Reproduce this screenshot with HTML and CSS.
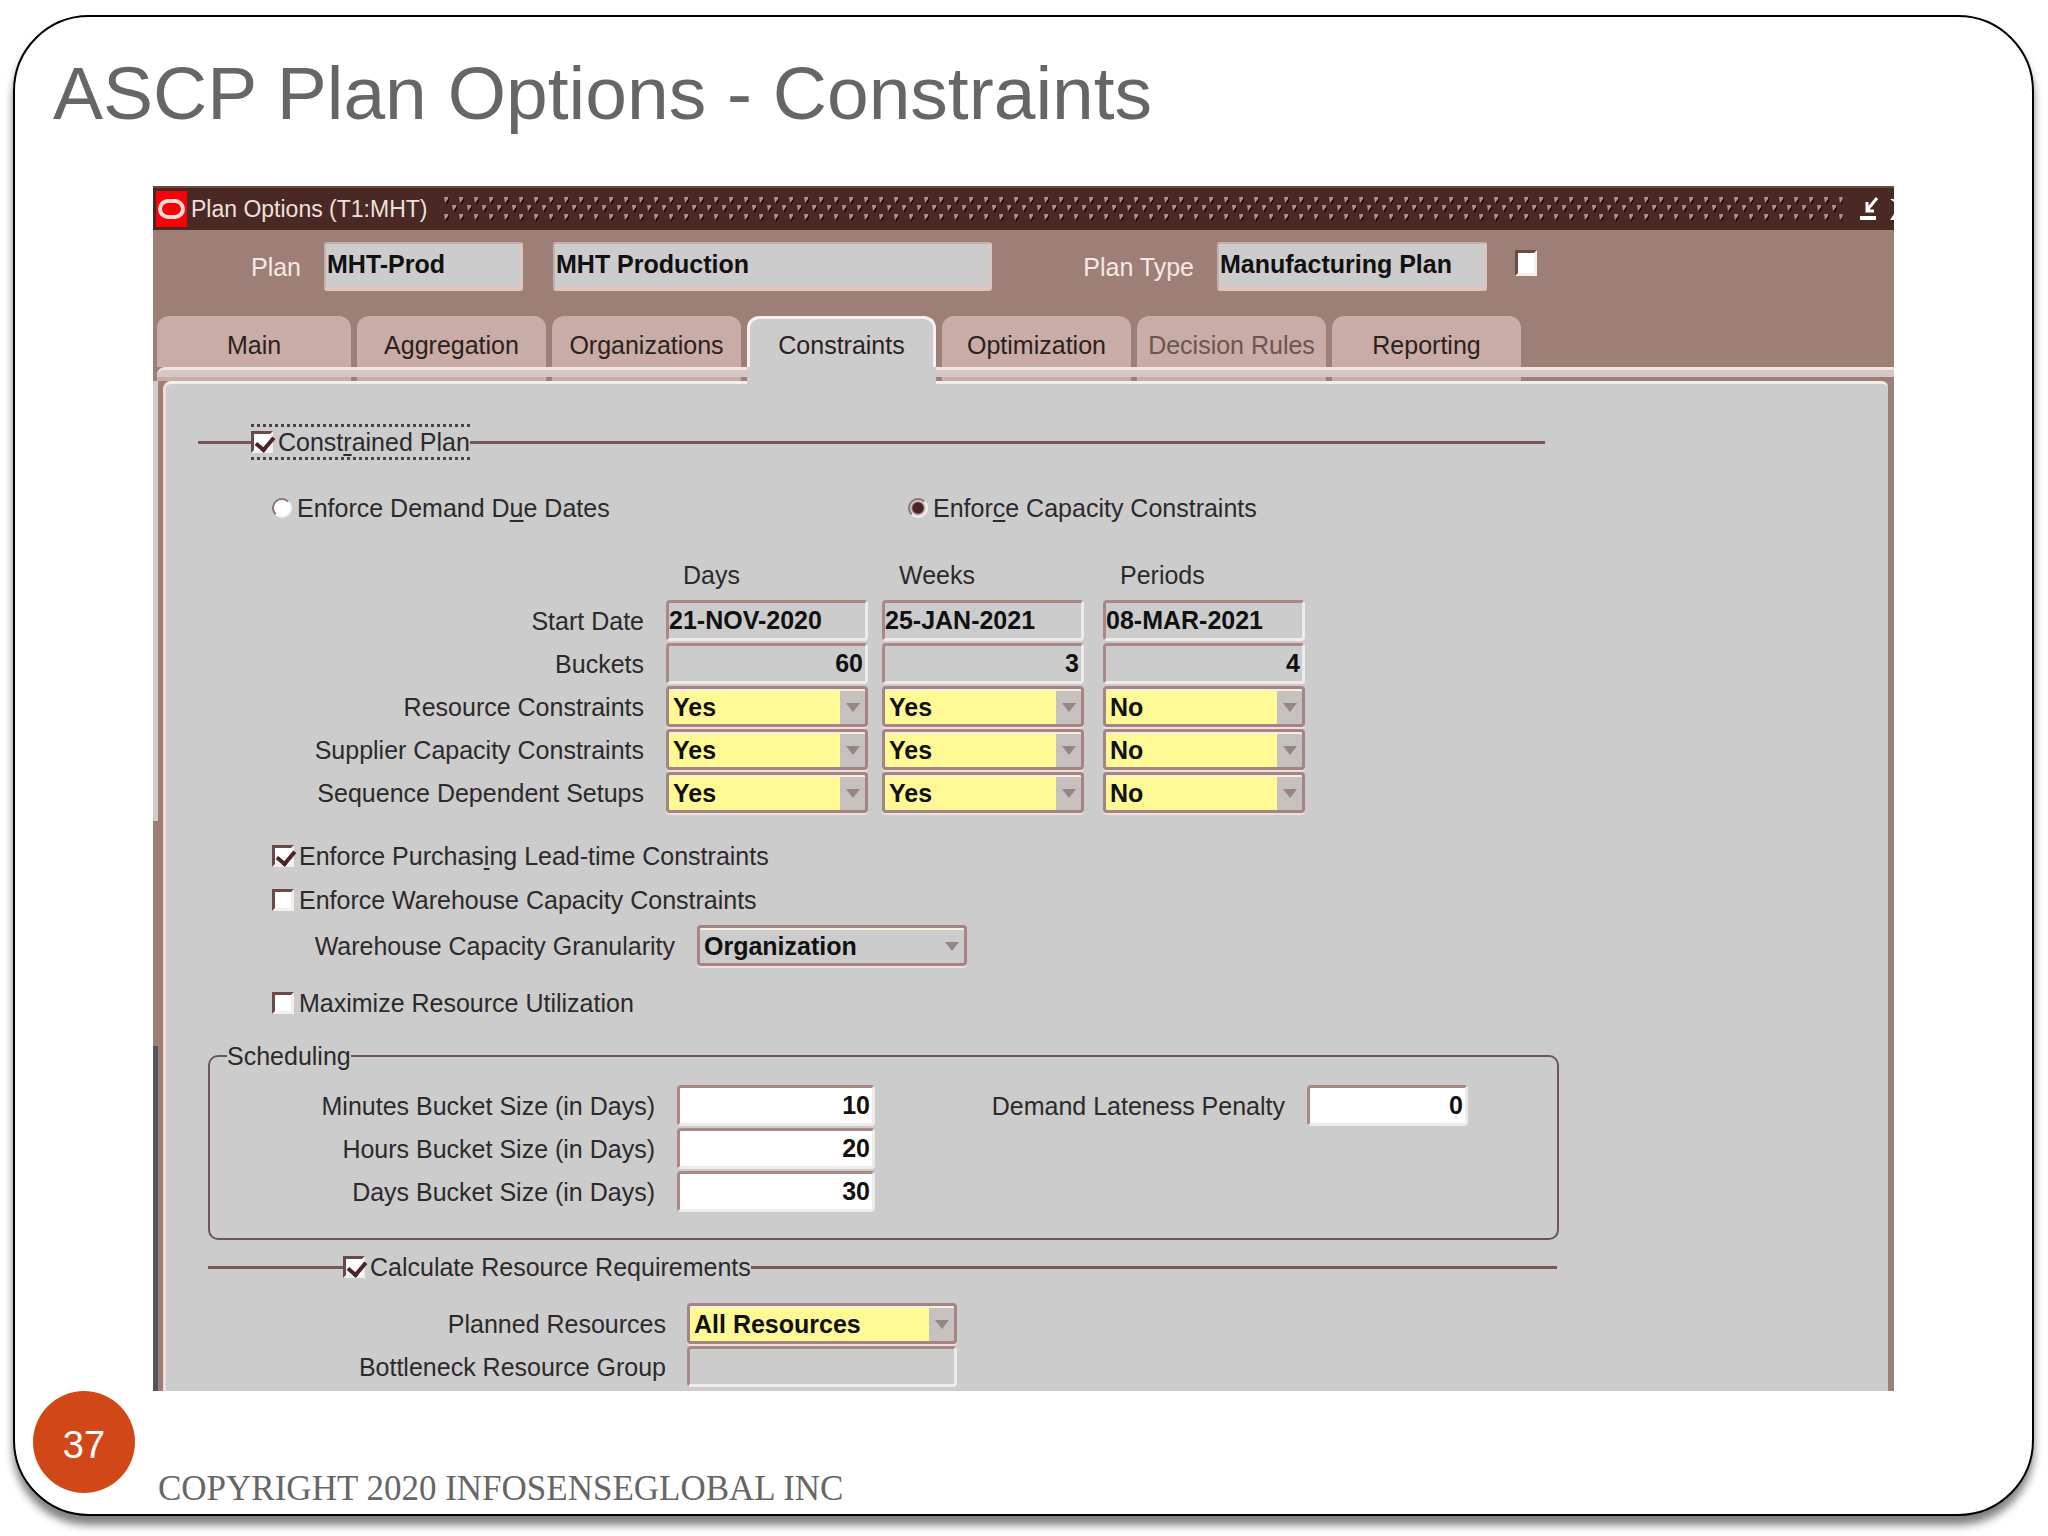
FILE: index.html
```html
<!DOCTYPE html>
<html lang="en">

<head>
  <meta charset="UTF-8" />
  <title>ASCP Plan Options - Constraints</title>
  <link rel="stylesheet" href="styles.css">
</head>

<body>

  <main class="slide">
    <h1 class="slide-title">ASCP Plan Options - Constraints</h1>

    <section class="window">

      <!-- Title bar -->
      <header class="titlebar">
        <svg class="logo" viewBox="0 0 31 36" aria-hidden="true">
          <rect width="31" height="36" fill="#fb0007" />
          <rect x="4" y="10" width="23" height="16" rx="8" fill="none" stroke="#ffdcd8" stroke-width="4" />
        </svg>
        <span class="titlebar-text">Plan Options (T1:MHT)</span>
        <svg class="grip" aria-hidden="true">
          <defs>
            <pattern id="dots" width="15" height="26" patternUnits="userSpaceOnUse">
              <path d="M3 6l3-4v3l-3 4zM11 14l3-4v3l-3 4zM3 23l3-4v3l-3 4z" fill="#1d0b09" />
              <path d="M1 1h4v2l-3 4zM9 9h4v2l-3 4zM1 18h4v2l-3 4z" fill="#b48e85" />
            </pattern>
          </defs>
          <rect width="100%" height="26" fill="url(#dots)" />
        </svg>
        <button class="win-btn" aria-label="Minimize">
          <svg width="20" height="24" viewBox="0 0 20 24">
            <path d="M18 1L9 12M8 5v9h7" fill="none" stroke="#fff" stroke-width="3" />
            <path d="M1 21h16" stroke="#fff" stroke-width="4" />
          </svg>
        </button>
        <button class="win-btn win-btn-cut" aria-label="Restore">
          <svg width="4" height="24" viewBox="0 0 4 24">
            <path d="M0 2h4v3zM4 17v6H0z" fill="#fff" />
          </svg>
        </button>
      </header>

      <!-- Plan header -->
      <div class="plan-row">
        <label class="plan-label" for="plan">Plan</label>
        <input class="plan-field plan-code" id="plan" type="text" value="MHT-Prod" readonly>
        <input class="plan-field plan-name" type="text" value="MHT Production" aria-label="Plan description" readonly>
        <label class="plan-label plan-type-label" for="planType">Plan Type</label>
        <input class="plan-field plan-type" id="planType" type="text" value="Manufacturing Plan" readonly>
        <input class="check plan-check" type="checkbox" aria-label="Plan flag">
      </div>

      <nav class="tabs">
        <button class="tab">Main</button>
        <button class="tab">Aggregation</button>
        <button class="tab">Organizations</button>
        <button class="tab active">Constraints</button>
        <button class="tab">Optimization</button>
        <button class="tab disabled">Decision Rules</button>
        <button class="tab">Reporting</button>
      </nav>
      <div class="tab-edge"></div>
      <div class="tab-shadow"><i></i><i></i><i></i><i></i><i></i><i></i><i></i></div>

      <div class="window-body">
        <div class="behind"></div>
        <form class="panel">

          <div class="rule-row constrained">
            <label class="check-label focused"><input class="check" type="checkbox" checked><span>Const<u>r</u>ained Plan</span></label>
          </div>

          <div class="radio-row">
            <label class="check-label"><input class="radio" type="radio" name="enforce"><span>Enforce Demand D<u>u</u>e Dates</span></label>
            <label class="check-label"><input class="radio" type="radio" name="enforce" checked><span>Enfor<u>c</u>e Capacity Constraints</span></label>
          </div>

          <!-- Buckets -->
          <div class="buckets">
            <span class="col-head first">Days</span>
            <span class="col-head">Weeks</span>
            <span class="col-head">Periods</span>

            <label for="startDays">Start Date</label>
            <input class="field" id="startDays" type="text" value="21-NOV-2020" readonly>
            <input class="field" type="text" value="25-JAN-2021" aria-label="Start Date, Weeks" readonly>
            <input class="field" type="text" value="08-MAR-2021" aria-label="Start Date, Periods" readonly>

            <label for="bucketDays">Buckets</label>
            <input class="field num" id="bucketDays" type="text" value="60" readonly>
            <input class="field num" type="text" value="3" aria-label="Buckets, Weeks" readonly>
            <input class="field num" type="text" value="4" aria-label="Buckets, Periods" readonly>

            <label for="resDays">Resource Constraints</label>
            <div class="drop"><select id="resDays"><option>Yes</option><option>No</option></select></div>
            <div class="drop"><select aria-label="Resource Constraints, Weeks"><option>Yes</option><option>No</option></select></div>
            <div class="drop"><select aria-label="Resource Constraints, Periods"><option>No</option><option>Yes</option></select></div>

            <label for="supDays">Supplier Capacity Constraints</label>
            <div class="drop"><select id="supDays"><option>Yes</option><option>No</option></select></div>
            <div class="drop"><select aria-label="Supplier Capacity, Weeks"><option>Yes</option><option>No</option></select></div>
            <div class="drop"><select aria-label="Supplier Capacity, Periods"><option>No</option><option>Yes</option></select></div>

            <label for="seqDays">Sequence Dependent Setups</label>
            <div class="drop"><select id="seqDays"><option>Yes</option><option>No</option></select></div>
            <div class="drop"><select aria-label="Sequence Setups, Weeks"><option>Yes</option><option>No</option></select></div>
            <div class="drop"><select aria-label="Sequence Setups, Periods"><option>No</option><option>Yes</option></select></div>
          </div>

          <div class="options">
            <label class="check-label"><input class="check" type="checkbox" checked><span>Enforce Purchas<u>i</u>ng Lead-time Constraints</span></label>
            <label class="check-label"><input class="check" type="checkbox"><span>Enforce Warehouse Capacity Constraints</span></label>
          </div>
          <div class="granularity">
            <label for="gran">Warehouse Capacity Granularity</label>
            <div class="drop plain wide"><select id="gran"><option>Organization</option></select></div>
          </div>
          <div class="options maximize">
            <label class="check-label"><input class="check" type="checkbox"><span>Maximize Resource Utilization</span></label>
          </div>

          <fieldset class="scheduling">
            <legend>Scheduling</legend>
            <div class="sched-grid">
              <label for="minSize">Minutes Bucket Size (in Days)</label>
              <input class="field white num" id="minSize" type="text" value="10">
              <label for="penalty">Demand Lateness Penalty</label>
              <input class="field white num penalty" id="penalty" type="text" value="0">
              <label class="row-start" for="hourSize">Hours Bucket Size (in Days)</label>
              <input class="field white num" id="hourSize" type="text" value="20">
              <label class="row-start" for="daySize">Days Bucket Size (in Days)</label>
              <input class="field white num" id="daySize" type="text" value="30">
            </div>
          </fieldset>

          <div class="rule-row calculate">
            <label class="check-label"><input class="check" type="checkbox" checked><span>Calculate Resource Requirements</span></label>
          </div>

          <div class="resources">
            <label for="planned">Planned Resources</label>
            <div class="drop wide"><select id="planned"><option>All Resources</option></select></div>
            <label for="bottleneck">Bottleneck Resource Group</label>
            <input class="field wide" id="bottleneck" type="text" readonly>
          </div>

        </form>
      </div>
    </section>

    <footer class="slide-footer">
      <span class="page-number">37</span>
      <span class="copyright">COPYRIGHT 2020 INFOSENSEGLOBAL INC</span>
    </footer>
  </main>

</body>

</html>
```

FILE: styles.css
```css
* {
  box-sizing: border-box;
}

body {
  margin: 0;
  padding: 15px 14px 20px 13px;
  background: #fff;
  font-family: "Liberation Sans", Arial, sans-serif;
}

.slide {
  display: flex;
  flex-direction: column;
  min-height: calc(100vh - 35px);
  padding: 0 138px;
  border: 2px solid #000;
  border-radius: 76px;
  background: #fff;
  box-shadow: 0 9px 9px rgba(0, 0, 0, 0.5);
}

.slide-title {
  margin: 33px 0 50px -100px;
  font-size: 75px;
  font-weight: normal;
  line-height: 86px;
  color: #666;
}

/* WINDOW */
.window {
  background: #9e7f78;
  overflow: hidden;
}

.titlebar {
  display: flex;
  align-items: center;
  height: 44px;
  padding-left: 3px;
  background: #4a2824;
  border-top: 2px solid #6a4a46;
}

.logo {
  width: 31px;
  height: 36px;
}

.titlebar-text {
  margin-left: 4px;
  font-size: 23px;
  line-height: 36px;
  color: #eee0dc;
}

.grip {
  flex: 1;
  height: 26px;
  margin: 0 16px 0 16px;
}

.win-btn {
  height: 24px;
  padding: 0;
  border: 0;
  background: none;
}

.win-btn-cut {
  margin-left: 11px;
}

.win-btn svg {
  display: block;
}

.plan-row {
  display: flex;
  align-items: center;
  padding: 12px 0 25px;
}

.plan-label {
  width: 171px;
  padding: 2px 23px 0 0;
  text-align: right;
  font-size: 25px;
  color: #f6e8e4;
}

.plan-field {
  height: 49px;
  padding: 0 0 1px 1px;
  border: 2px solid #c4b0ac;
  border-right: 3px solid #dcc4c0;
  border-bottom: 5px solid #dcc4c0;
  border-radius: 3px;
  background: #cbcccb;
  font-family: inherit;
  font-size: 25px;
  font-weight: bold;
  color: #111;
}

.plan-code {
  width: 199px;
}

.plan-name {
  width: 439px;
  margin-left: 30px;
}

.plan-type-label {
  width: 225px;
}

.plan-type {
  width: 270px;
}

/* TABS */
.tabs {
  display: grid;
  grid-template-columns: 194px repeat(6, 189px);
  grid-template-rows: 51px;
  gap: 6px;
  padding-left: 4px;
}

.tab {
  padding: 8px 0 0;
  border: 0;
  border-radius: 12px 12px 0 0;
  background: #c9aca5;
  font-family: inherit;
  font-size: 25px;
  white-space: nowrap;
  color: #2b2220;
}

.tab.active {
  position: relative;
  border: 3px solid #f8f0ee;
  border-bottom: 0;
  background: #ccc;
  padding-top: 5px;
}

.tab.active::after {
  content: "";
  position: absolute;
  top: 48px;
  left: -3px;
  right: -3px;
  height: 17px;
  background: #ccc;
}

.tab.disabled {
  color: #6d5550;
}

.tab-edge {
  height: 10px;
  margin-left: 4px;
  border-top: 3px solid #f2e4e1;
  border-radius: 8px 0 0 0;
  background: #d4c8c7;
}

.tab-shadow {
  display: grid;
  grid-template-columns: 194px repeat(6, 189px);
  gap: 6px;
  height: 4px;
  padding-left: 4px;
}

.tab-shadow i {
  background: #c9aca5;
}

.window-body {
  display: flex;
  padding-right: 6px;
}

.behind {
  width: 5px;
  background: linear-gradient(#d0cccb 440px, #9e7f78 440px 665px, #55535c 665px);
}

.panel {
  flex: 1;
  margin-left: 5px;
  padding: 40px 0 4px;
  border-top: 3px solid #f5efec;
  border-left: 3px solid #f0dcd8;
  border-radius: 8px 6px 0 0;
  background: #ccc;
  font-size: 25px;
  line-height: 30px;
  color: #2c2a2b;
}

/* CHECK BOXES AND RADIOS */
.check {
  flex: none;
  width: 22px;
  height: 22px;
  margin: 0;
  appearance: none;
  border: 3px solid #6a4a48;
  border-right-color: #f4eeec;
  border-bottom-color: #f4eeec;
  background: #fff;
}

.check:checked {
  position: relative;
}

.check:checked::after {
  content: "";
  position: absolute;
  left: 5px;
  top: -1px;
  width: 8px;
  height: 14px;
  border: solid #4c2427;
  border-width: 0 4px 4px 0;
  transform: rotate(40deg);
}

.plan-check {
  height: 26px;
  margin: 0 0 8px 28px;
}

.radio {
  flex: none;
  width: 20px;
  height: 20px;
  margin: 0;
  appearance: none;
  border: 2px solid #f4f0ee;
  border-top-color: #8a7472;
  border-left-color: #8a7472;
  border-radius: 50%;
  background: #fff;
}

.radio:checked {
  background: radial-gradient(circle, #4c2427 5px, #d8d0ce 7px);
}

.check-label {
  display: flex;
  align-items: center;
  gap: 5px;
}

u {
  text-decoration-thickness: 2px;
  text-underline-offset: 3px;
}

.rule-row {
  display: flex;
  align-items: center;
  max-width: 1347px;
}

.rule-row::before,
.rule-row::after {
  content: "";
  height: 3px;
  background: #795858;
}

.rule-row::after {
  flex: 1;
}

.constrained {
  margin-left: 32px;
}

.constrained::before {
  width: 53px;
}

.focused {
  height: 36px;
  border-top: 3px dotted #444;
  border-bottom: 3px dotted #444;
}

.radio-row {
  display: flex;
  margin: 33px 0 37px 106px;
}

.radio-row .check-label {
  width: 636px;
}

/* FIELDS */
.field,
.drop select {
  width: 202px;
  height: 41px;
  font-family: inherit;
  font-size: 25px;
  font-weight: bold;
  color: #111;
}

.field {
  padding: 0;
  border: 3px solid #aa8886;
  border-right-color: #f0ebea;
  border-bottom-color: #f0ebea;
  border-radius: 4px;
  background: #ccc;
}

.field.white {
  width: 198px;
  background: #fff;
}

.num {
  padding-right: 2px;
  text-align: right;
}

.drop {
  position: relative;
  width: 202px;
}

.drop select {
  display: block;
  padding: 0 0 0 4px;
  appearance: none;
  border: 3px solid #a58583;
  border-radius: 4px;
  box-shadow: 0 2px 0 #f0dfdd, inset 0 2px 0 #f8eee0;
  background: linear-gradient(to left, #c6c0bf 25px, #fef995 25px);
}

.drop::after {
  content: "";
  position: absolute;
  top: 17px;
  right: 8px;
  border: 7px solid transparent;
  border-top: 9px solid #978583;
  border-bottom: 0;
}

.drop.plain select {
  background: #ccc;
}

.field.wide,
.drop.wide,
.drop.wide select {
  width: 270px;
}

.buckets {
  display: grid;
  grid-template-columns: 500px 216px 221px 202px;
  row-gap: 2px;
  align-items: center;
}

.buckets label {
  padding-right: 22px;
  text-align: right;
}

.col-head {
  padding: 0 0 8px 17px;
}

.col-head.first {
  grid-column: 2;
}

.options {
  display: flex;
  flex-direction: column;
  gap: 14px;
  margin: 28px 0 0 106px;
}

.granularity {
  display: flex;
  align-items: center;
  gap: 22px;
  margin: 10px 0 0 98px;
}

.granularity label {
  width: 411px;
  text-align: right;
}

.maximize {
  margin-top: 22px;
}

/* SCHEDULING */
.scheduling {
  max-width: 1351px;
  margin: 24px 0 0 42px;
  padding: 15px 0 26px;
  border: 2px solid #6f5555;
  border-radius: 10px;
}

.scheduling legend {
  margin-left: 17px;
  padding: 0;
  line-height: 28px;
}

.sched-grid {
  display: grid;
  grid-template-columns: 467px 198px 432px 161px;
  row-gap: 2px;
  align-items: center;
}

.sched-grid label {
  padding-right: 22px;
  text-align: right;
}

.sched-grid .row-start {
  grid-column: 1;
}

.field.penalty {
  width: 161px;
}

.calculate {
  max-width: 1349px;
  margin: 12px 0 21px 42px;
}

.calculate::before {
  width: 135px;
}

.resources {
  display: grid;
  grid-template-columns: 521px 270px;
  row-gap: 2px;
  align-items: center;
}

.resources label {
  padding-right: 21px;
  text-align: right;
}

/* FOOTER */
.slide-footer {
  display: flex;
  margin-left: -120px;
}

.page-number {
  width: 102px;
  height: 102px;
  border-radius: 50%;
  background: #d24717;
  text-align: center;
  font-size: 38px;
  line-height: 108px;
  color: #fff;
}

.copyright {
  margin: 78px 0 0 23px;
  font-family: "Liberation Serif", serif;
  font-size: 35px;
  line-height: 40px;
  color: #666;
}
```
